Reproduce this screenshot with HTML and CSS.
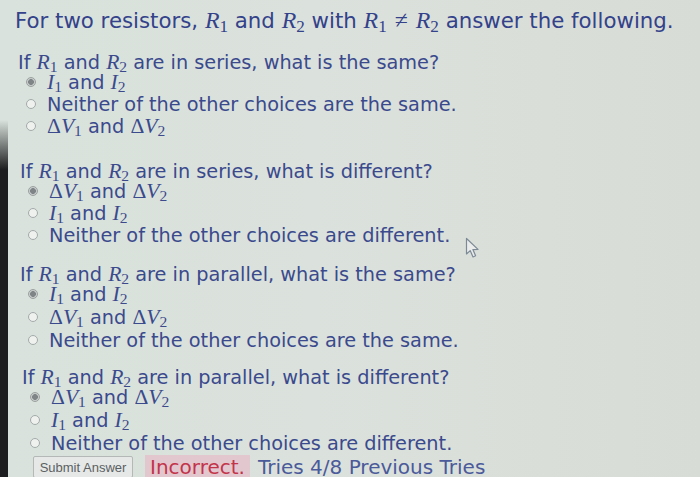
FILE: index.html
```
<!DOCTYPE html>
<html>
<head>
<meta charset="utf-8">
<link rel="stylesheet" href="styles.css">
</head>
<body>
<div class="bezel"></div>
<div class="page">
  <p class="title">For two resistors, <span class="m"><i>R</i><sub>1</sub></span> and <span class="m"><i>R</i><sub>2</sub></span> with <span class="m"><i>R</i><sub>1</sub> <span class="ne">≠</span> <i>R</i><sub>2</sub></span> answer the following.</p>

  <div class="q q1">
    <p class="prompt">If <span class="m"><i>R</i><sub>1</sub></span> and <span class="m"><i>R</i><sub>2</sub></span> are in series, what is the same?</p>
    <ul class="opts">
      <li><span class="radio sel"></span><span class="m"><i>I</i><sub>1</sub></span> and <span class="m"><i>I</i><sub>2</sub></span></li>
      <li><span class="radio"></span>Neither of the other choices are the same.</li>
      <li><span class="radio"></span><span class="m">Δ<i>V</i><sub>1</sub></span> and <span class="m">Δ<i>V</i><sub>2</sub></span></li>
    </ul>
  </div>

  <div class="q q2">
    <p class="prompt">If <span class="m"><i>R</i><sub>1</sub></span> and <span class="m"><i>R</i><sub>2</sub></span> are in series, what is different?</p>
    <ul class="opts">
      <li><span class="radio sel"></span><span class="m">Δ<i>V</i><sub>1</sub></span> and <span class="m">Δ<i>V</i><sub>2</sub></span></li>
      <li><span class="radio"></span><span class="m"><i>I</i><sub>1</sub></span> and <span class="m"><i>I</i><sub>2</sub></span></li>
      <li><span class="radio"></span>Neither of the other choices are different.</li>
    </ul>
  </div>

  <div class="q q3">
    <p class="prompt">If <span class="m"><i>R</i><sub>1</sub></span> and <span class="m"><i>R</i><sub>2</sub></span> are in parallel, what is the same?</p>
    <ul class="opts">
      <li><span class="radio sel"></span><span class="m"><i>I</i><sub>1</sub></span> and <span class="m"><i>I</i><sub>2</sub></span></li>
      <li><span class="radio"></span><span class="m">Δ<i>V</i><sub>1</sub></span> and <span class="m">Δ<i>V</i><sub>2</sub></span></li>
      <li><span class="radio"></span>Neither of the other choices are the same.</li>
    </ul>
  </div>

  <div class="q q4">
    <p class="prompt">If <span class="m"><i>R</i><sub>1</sub></span> and <span class="m"><i>R</i><sub>2</sub></span> are in parallel, what is different?</p>
    <ul class="opts">
      <li><span class="radio sel"></span><span class="m">Δ<i>V</i><sub>1</sub></span> and <span class="m">Δ<i>V</i><sub>2</sub></span></li>
      <li><span class="radio"></span><span class="m"><i>I</i><sub>1</sub></span> and <span class="m"><i>I</i><sub>2</sub></span></li>
      <li><span class="radio"></span>Neither of the other choices are different.</li>
    </ul>
  </div>

  <div class="submit-row">
    <button class="submit">Submit Answer</button>
    <span class="incorrect">Incorrect.</span>
    <span class="tries">Tries 4/8 Previous Tries</span>
  </div>
</div>
<svg class="cursor" width="16" height="22" viewBox="0 0 16 22">
  <path d="M1.5 1.5 L1.5 17 L5.2 13.6 L8 20 L10.6 18.8 L7.9 12.6 L13 12.4 Z" fill="#e9ecea" stroke="#7d8a96" stroke-width="1.2" stroke-linejoin="round"/>
</svg>
</body>
</html>
```

FILE: styles.css
```
html, body {
  margin: 0;
  padding: 0;
  height: 100%;
  overflow: hidden;
}

body {
  background: linear-gradient(90deg, #d9e2dc 0%, #dbe1dc 45%, #d8dcd7 100%);
  font-family: "DejaVu Sans", Verdana, sans-serif;
  color: #3a4a8d;
  position: relative;
}

.bezel {
  position: absolute;
  left: 0;
  top: 0;
  width: 8px;
  height: 477px;
  background: linear-gradient(180deg, rgba(28, 29, 30, 0) 0, rgba(28, 29, 30, 0) 120px, #1c1d1e 170px, #1c1d1e 100%);
  z-index: 2;
}

.page {
  padding: 9px 0 0 15px;
}

p, ul {
  margin: 0;
  padding: 0;
}

.title {
  font-size: 21.3px;
  line-height: 22px;
  height: 22px;
  color: #33428a;
  white-space: nowrap;
}

.m {
  font-family: "Liberation Serif", "DejaVu Serif", serif;
  font-size: 1.12em;
  line-height: 1;
}

.m i {
  font-style: italic;
}

.m sub {
  font-size: 0.72em;
  font-style: normal;
  vertical-align: -0.22em;
  line-height: 1;
}

.ne {
  padding: 0 2px;
}

.q {
  margin-top: 21px;
  font-size: 19.3px;
  white-space: nowrap;
}

.q2 { margin-top: 23px; padding-left: 2px; }
.q3 { margin-top: 17px; padding-left: 2px; }
.q4 { margin-top: 15px; padding-left: 4px; }

.prompt {
  line-height: 20px;
  height: 20px;
  padding-left: 3px;
}

.opts {
  list-style: none;
  padding-left: 11px;
}

.opts li {
  height: 22px;
  line-height: 22px;
}

.q3 .opts li:not(:first-child),
.q4 .opts li:not(:first-child) {
  height: 23px;
  line-height: 23px;
}

.radio {
  display: inline-block;
  width: 8px;
  height: 8px;
  border-radius: 50%;
  border: 1px solid #a3aaa9;
  background: #eef1ee;
  margin-right: 11px;
  vertical-align: 2px;
}

.radio.sel {
  background: radial-gradient(circle, #7f8586 0 2.6px, #c9cecc 3.2px);
  border-color: #9aa09f;
}

.submit-row {
  display: flex;
  align-items: center;
  gap: 12px;
  padding-left: 18px;
  margin-top: 0;
  white-space: nowrap;
}

.submit {
  font-family: "Liberation Sans", Arial, sans-serif;
  font-size: 13px;
  color: #5b5f63;
  background: #e5e8e6;
  border: 1px solid #b4b8b7;
  border-radius: 2px;
  height: 22px;
  padding: 0 3px;
  width: 100px;
}

.incorrect {
  background: #e2c7cf;
  color: #c2344a;
  font-size: 20px;
  line-height: 24px;
  padding: 0 5px 0 5px;
}

.tries {
  font-size: 20px;
  color: #4a5a9a;
  margin-left: -4px;
}

.cursor {
  position: absolute;
  left: 465px;
  top: 237px;
}
```
